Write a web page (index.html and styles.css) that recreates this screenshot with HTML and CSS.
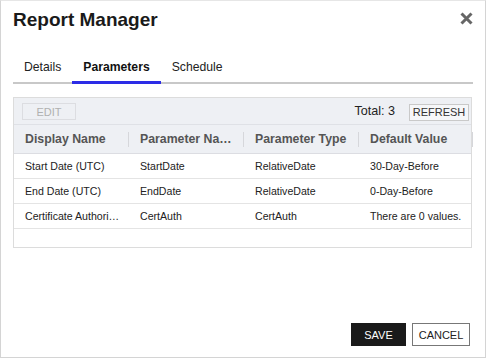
FILE: index.html
```html
<!DOCTYPE html>
<html>
<head>
<meta charset="utf-8">
<link rel="stylesheet" href="styles.css">
</head>
<body>
<div class="dialog">
  <div class="title-bar">
    <h1 class="title">Report Manager</h1>
    <svg class="close" width="13" height="13" viewBox="0 0 13 13"><path d="M1.5 1.5 L11.5 11.5 M11.5 1.5 L1.5 11.5" stroke="#666" stroke-width="3" stroke-linecap="butt"/></svg>
  </div>
  <div class="tabs">
    <div class="tab">Details</div>
    <div class="tab active">Parameters</div>
    <div class="tab">Schedule</div>
  </div>
  <div class="grid">
    <div class="toolbar">
      <button class="btn-edit" disabled>EDIT</button>
      <div class="toolbar-right">
        <span class="total">Total: 3</span>
        <button class="btn-refresh">REFRESH</button>
      </div>
    </div>
    <div class="row head">
      <div class="cell">Display Name</div>
      <div class="cell">Parameter Na…</div>
      <div class="cell">Parameter Type</div>
      <div class="cell">Default Value</div>
    </div>
    <div class="row">
      <div class="cell">Start Date (UTC)</div>
      <div class="cell">StartDate</div>
      <div class="cell">RelativeDate</div>
      <div class="cell">30-Day-Before</div>
    </div>
    <div class="row">
      <div class="cell">End Date (UTC)</div>
      <div class="cell">EndDate</div>
      <div class="cell">RelativeDate</div>
      <div class="cell">0-Day-Before</div>
    </div>
    <div class="row">
      <div class="cell">Certificate Authori…</div>
      <div class="cell">CertAuth</div>
      <div class="cell">CertAuth</div>
      <div class="cell">There are 0 values.</div>
    </div>
  </div>
  <div class="footer">
    <button class="btn-save">SAVE</button>
    <button class="btn-cancel">CANCEL</button>
  </div>
</div>
</body>
</html>
```
FILE: styles.css
```css
* { box-sizing: border-box; }
html, body { margin: 0; padding: 0; background: #fff; }
body { font-family: "Liberation Sans", Arial, sans-serif; color: #222; }
.dialog {
  width: 486px;
  height: 358px;
  border: 1px solid #d4d4d4;
  border-top-color: #e6e6e6;
  padding: 0 12px 0 12px;
  display: flex;
  flex-direction: column;
  background: #fff;
}
.title-bar {
  display: flex;
  justify-content: space-between;
  align-items: flex-start;
  height: 54px;
  padding-top: 6px;
}
.title {
  margin: 0;
  font-size: 19px;
  font-weight: bold;
  color: #1a1a1a;
  line-height: 26px;
}
.close { margin-top: 5px; margin-right: 0; }
.tabs {
  display: flex;
  border-bottom: 2px solid #c8c8c8;
  height: 29px;
}
.tab {
  font-size: 12.2px;
  color: #222;
  padding: 0 11px;
  line-height: 18px;
  padding-top: 3px;
  position: relative;
}
.tab.active {
  font-weight: bold;
  color: #111;
}
.tab.active::after {
  content: "";
  position: absolute;
  left: 0;
  right: 0;
  bottom: -2px;
  height: 3px;
  background: #2c2ce6;
}
.grid {
  margin-top: 13px;
  border: 1px solid #dcdcdc;
  height: 151px;
  margin-right: 1px;
}
.toolbar {
  display: flex;
  justify-content: space-between;
  align-items: center;
  height: 27px;
  background: #eef0f4;
  padding: 0 2px 0 8px;
  border-bottom: 1px solid #dfe1e6;
}
button {
  font-family: "Liberation Sans", Arial, sans-serif;
  cursor: pointer;
}
.btn-edit {
  width: 54px;
  height: 17px;
  font-size: 11px;
  color: #b0b0b0;
  background: #eef0f4;
  border: 1px solid #dcdde1;
  padding: 0;
  margin-top: 1px;
}
.toolbar-right { display: flex; align-items: center; }
.total { font-size: 12.6px; color: #222; margin-right: 14px; }
.btn-refresh {
  width: 60px;
  height: 17px;
  font-size: 11px;
  color: #333;
  background: #f6f7f9;
  border: 1px solid #c9c9c9;
  padding: 0;
  margin-top: 2px;
}
.row {
  display: grid;
  grid-template-columns: 115px 115px 115px 114px;
  height: 25px;
  border-bottom: 1px solid #e4e4e4;
  align-items: center;
}
.row.head {
  height: 29px;
  background: #eef0f4;
  border-bottom: 1px solid #dcdde2;
}
.cell {
  font-size: 10.6px;
  color: #222;
  padding-left: 11px;
  white-space: nowrap;
  overflow: hidden;
}
.head .cell {
  font-size: 12.3px;
  font-weight: bold;
  color: #555;
  position: relative;
  line-height: 28px;
}
.head .cell::after {
  content: "";
  position: absolute;
  right: 0;
  top: 7px;
  height: 15px;
  width: 1px;
  background: #d6d7db;
}
.footer {
  margin-top: auto;
  display: flex;
  justify-content: flex-end;
  gap: 6px;
  padding-bottom: 11px;
  padding-right: 3px;
}
.btn-save, .btn-cancel {
  height: 23px;
  font-size: 11px;
  padding: 0;
}
.btn-save {
  width: 55px;
  background: #1a1a1a;
  color: #fff;
  border: 1px solid #1a1a1a;
}
.btn-cancel {
  width: 58px;
  background: #fff;
  color: #222;
  border: 1px solid #777;
}
```
